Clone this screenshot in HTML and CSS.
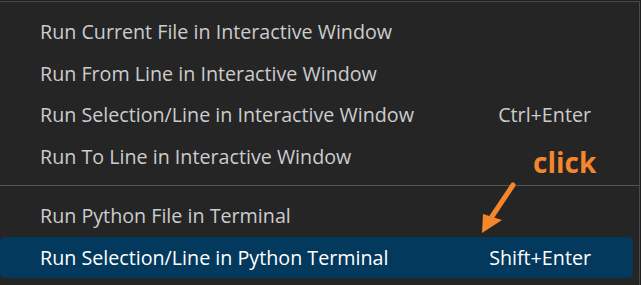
FILE: index.html
```html
<!DOCTYPE html>
<html lang="en">
<head>
<meta charset="utf-8">
<title>Run menu</title>
<link rel="stylesheet" href="styles.css">
</head>
<body>
<div class="menu">
  <ul class="group">
    <li class="item"><span class="label">Run Current File in Interactive Window</span></li>
    <li class="item"><span class="label">Run From Line in Interactive Window</span></li>
    <li class="item"><span class="label">Run Selection/Line in Interactive Window</span><span class="key">Ctrl+Enter</span></li>
    <li class="item"><span class="label">Run To Line in Interactive Window</span></li>
  </ul>
  <div class="separator"></div>
  <ul class="group">
    <li class="item"><span class="label">Run Python File in Terminal</span></li>
    <li class="item active"><span class="label">Run Selection/Line in Python Terminal</span><span class="key">Shift+Enter</span></li>
  </ul>
  <div class="annotation">
    <span class="click">click</span>
    <svg class="arrow" width="60" height="70" viewBox="0 0 60 70">
      <line x1="33" y1="5" x2="9" y2="41" stroke="#f5862b" stroke-width="5" stroke-linecap="round"/>
      <polygon points="2,53 3,34 22,40" fill="#f5862b"/>
    </svg>
  </div>
</div>
</body>
</html>
```
FILE: styles.css
```css
html, body {
  margin: 0;
  padding: 0;
  background: #1f1f1f;
}
body {
  width: 641px;
  height: 285px;
  overflow: hidden;
  font-family: "Open Sans", "Noto Sans", sans-serif;
}
.menu {
  position: relative;
  margin-top: 1px;
  width: 640px;
  height: 284px;
  box-sizing: border-box;
  background: #252526;
  border-top: 1px solid #4a4a4a;
  border-right: 1px solid #4a4a4a;
  padding-top: 9px;
}
.group {
  list-style: none;
  margin: 0;
  padding: 0;
}
.item {
  display: flex;
  align-items: center;
  justify-content: space-between;
  height: 41.5px;
  margin-right: 6px;
  padding: 0 42px 0 40px;
  border-radius: 5px;
  color: #cccccc;
  font-size: 19.7px;
  white-space: nowrap;
}
.item.active {
  background: #04395e;
  color: #ffffff;
}
.separator {
  height: 1px;
  background: #555555;
  margin: 8px 0 9px 0;
}
.annotation {
  position: absolute;
  left: 478px;
  top: 140px;
  width: 130px;
  height: 95px;
}
.click {
  position: absolute;
  left: 55px;
  top: 0px;
  color: #f5862b;
  font-weight: 700;
  font-size: 28px;
  line-height: 40px;
}
.arrow {
  position: absolute;
  left: 2px;
  top: 38px;
}
```
